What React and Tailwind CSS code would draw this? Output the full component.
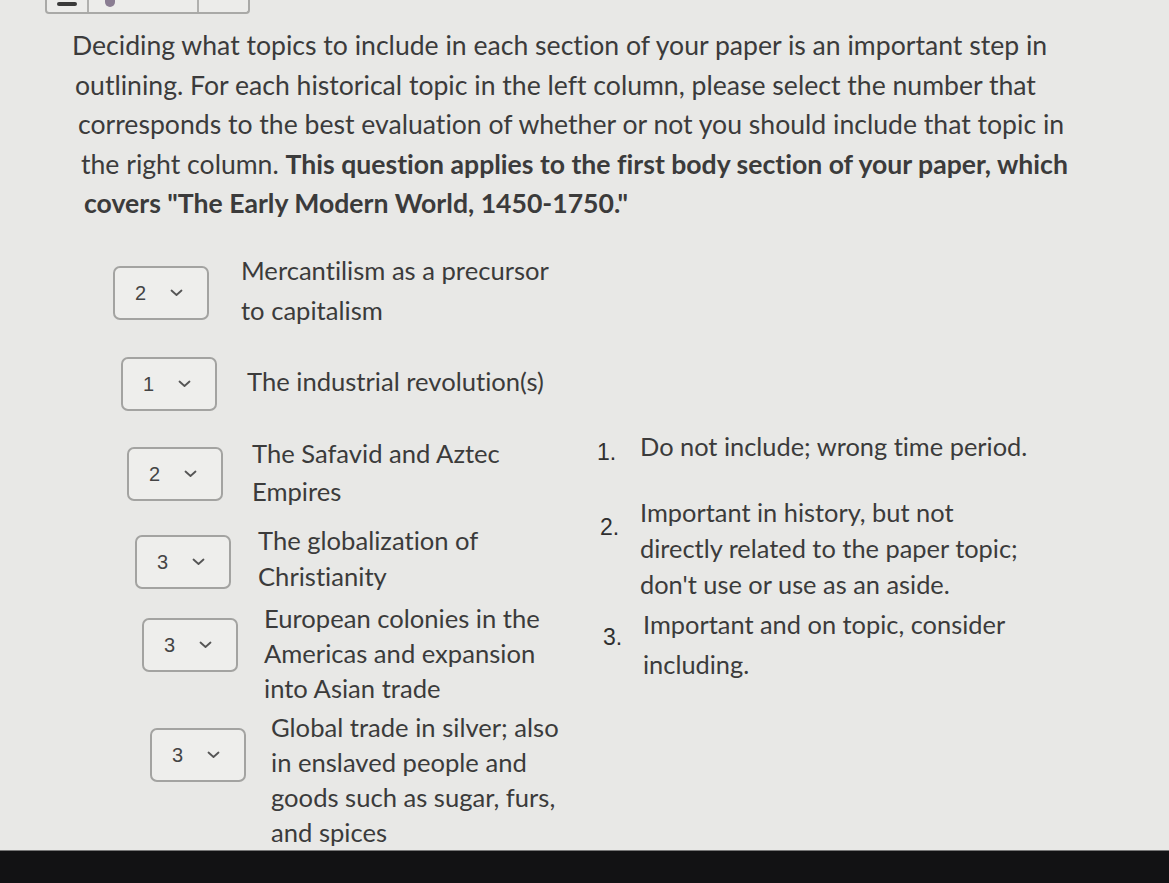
import React from "react";

const intro = [
    { ml: "ml-[72px]", parts: [["Deciding what topics to include in each section of your paper is an important step in", false]] },
    { ml: "ml-[75px]", parts: [["outlining. For each historical topic in the left column, please select the number that", false]] },
    { ml: "ml-[78px]", parts: [["corresponds to the best evaluation of whether or not you should include that topic in", false]] },
    { ml: "ml-[81px]", parts: [["the right column. ", false], ["This question applies to the first body section of your paper, which", true]] },
    { ml: "ml-[84px]", parts: [["covers \"The Early Modern World, 1450-1750.\"", true]] },
];

// each row: row height (distance to the next select), left pad, text offset and line height
const topics = [
    { value: "2", h: "h-[91px]", pad: "pl-[113px]", gap: "gap-[32px]", text: "-mt-[16px] leading-[40px]", lines: ["Mercantilism as a precursor", "to capitalism"] },
    { value: "1", h: "h-[90px]", pad: "pl-[121px]", gap: "gap-[30px]", text: "mt-[6px] leading-[36px]", lines: ["The industrial revolution(s)"] },
    { value: "2", h: "h-[88px]", pad: "pl-[127px]", gap: "gap-[29px]", text: "-mt-[13px] leading-[38px]", lines: ["The Safavid and Aztec", "Empires"] },
    { value: "3", h: "h-[83px]", pad: "pl-[135px]", gap: "gap-[27px]", text: "-mt-[13px] leading-[36px]", lines: ["The globalization of", "Christianity"] },
    { value: "3", h: "h-[110px]", pad: "pl-[142px]", gap: "gap-[26px]", text: "-mt-[17px] leading-[35px]", lines: ["European colonies in the", "Americas and expansion", "into Asian trade"] },
    { value: "3", h: "h-auto", pad: "pl-[150px]", gap: "gap-[25px]", text: "-mt-[18px] leading-[35px]", lines: ["Global trade in silver; also", "in enslaved people and", "goods such as sugar, furs,", "and spices"] },
];

function Chevron() {
    return (
        <svg width="13" height="8" viewBox="0 0 13 8" fill="none">
            <path d="M1.5 1.5 L6.5 6 L11.5 1.5" stroke="#555" strokeWidth="1.8" strokeLinecap="round" strokeLinejoin="round" />
        </svg>
    );
}

function FakeSelect({ value }) {
    return (
        <div className="w-[96px] h-[54px] shrink-0 rounded-[7px] border-2 border-[#a3a3a1] bg-[#eeeeec] flex items-center justify-between pl-[20px] pr-[24px]">
            <span className="text-[20px] text-[#444]" style={{ fontFamily: '"Liberation Sans", Arial, sans-serif' }}>{value}</span>
            <Chevron />
        </div>
    );
}

export default function App() {
    return (
        <div className="w-[1169px] h-[883px] overflow-hidden bg-[#e8e8e6] flex flex-col text-[#3b3b3b] [font-variant-ligatures:none]" style={{ fontFamily: 'Lato, "Open Sans", sans-serif' }}>
            {/* toolbar remnant at the top edge */}
            <div className="ml-[45px] w-[205px] h-[14px] flex border-2 border-t-0 border-[#a9a9a7] rounded-b-[4px] bg-[#ececea] shrink-0">
                <div className="w-[42px] border-r-2 border-[#b0b0ae] flex justify-center">
                    <div className="w-[20px] h-[4px] mt-[2px] bg-[#3a3a3a] rounded-sm" />
                </div>
                <div className="w-[110px] border-r-2 border-[#b0b0ae] pl-[16px]">
                    <div className="w-[10px] h-[7px] bg-[#8a7d92] rounded-b-full" />
                </div>
                <div className="flex-1" />
            </div>

            {/* instructions */}
            <div className="mt-[12px] text-[26.6px] leading-[39.5px]">
                {intro.map((line, i) => (
                    <div key={i} className={`${line.ml} whitespace-nowrap`}>
                        {line.parts.map(([t, b], j) => (
                            <span key={j} className={b ? "font-bold" : ""}>{t}</span>
                        ))}
                    </div>
                ))}
            </div>

            <div className="flex mt-[42px]">
                {/* left column: selects + topics */}
                <div className="w-[590px] shrink-0">
                    {topics.map((t, i) => (
                        <div key={i} className={`flex items-start ${t.gap} ${t.pad} ${t.h}`}>
                            <FakeSelect value={t.value} />
                            <div className={`text-[25.6px] ${t.text}`}>
                                {t.lines.map((l, k) => (
                                    <div key={k} className="whitespace-nowrap">{l}</div>
                                ))}
                            </div>
                        </div>
                    ))}
                </div>

                {/* right column: evaluation key */}
                <div className="mt-[162px] text-[25.4px] leading-[36px]">
                    <div className="flex ml-[7px]">
                        <span className="w-[43px] pt-[6px] text-[23px] text-[#2f2f2f]" style={{ fontFamily: '"Liberation Sans", Arial, sans-serif' }}>1.</span>
                        <div className="whitespace-nowrap">Do not include; wrong time period.</div>
                    </div>
                    <div className="flex ml-[10px] mt-[24px]">
                        <span className="w-[40px] pt-[15px] text-[23px] text-[#2f2f2f]" style={{ fontFamily: '"Liberation Sans", Arial, sans-serif' }}>2.</span>
                        <div className="whitespace-nowrap">
                            <div>Important in history, but not</div>
                            <div>directly related to the paper topic;</div>
                            <div>don't use or use as an aside.</div>
                        </div>
                    </div>
                    <div className="flex ml-[13px] mt-[2px]">
                        <span className="w-[40px] pt-[15px] text-[23px] text-[#2f2f2f]" style={{ fontFamily: '"Liberation Sans", Arial, sans-serif' }}>3.</span>
                        <div className="whitespace-nowrap leading-[40px]">
                            <div>Important and on topic, consider</div>
                            <div>including.</div>
                        </div>
                    </div>
                </div>
            </div>

            <div className="flex-1" />
            <div className="h-[36px] bg-[#121214] border-t border-[#777] shrink-0" />
        </div>
    );
}
